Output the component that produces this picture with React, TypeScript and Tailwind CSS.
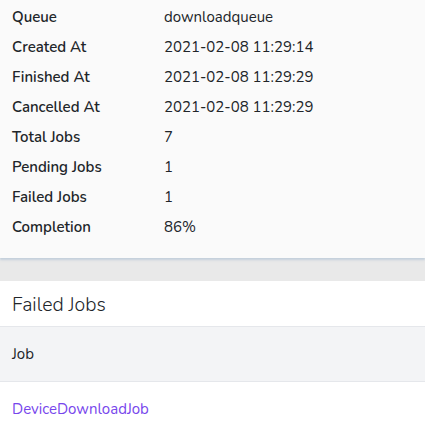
const rows: [string, string][] = [
  ['Queue', 'downloadqueue'],
  ['Created At', '2021-02-08 11:29:14'],
  ['Finished At', '2021-02-08 11:29:29'],
  ['Cancelled At', '2021-02-08 11:29:29'],
  ['Total Jobs', '7'],
  ['Pending Jobs', '1'],
  ['Failed Jobs', '1'],
  ['Completion', '86%'],
];

export default function App() {
  return (
    <div className="w-[425px] h-[436px] overflow-hidden bg-[#e9e9e9] text-[#212529] font-['Nunito','Lato',sans-serif] text-[15px]">
      <div className="bg-[#fafafa] pt-[2px] pb-[16px] shadow-[0_2px_2px_rgba(170,190,210,0.6)]">
        {rows.map(([label, value]) => (
          <div key={label} className="flex h-[30px] items-center px-[12px]">
            <div className="w-[152px] font-semibold">{label}</div>
            <div>{value}</div>
          </div>
        ))}
      </div>

      <div className="mt-[23px] bg-white">
        <div className="h-[45px] flex items-center pt-[3px] px-[12px] text-[19.5px] font-light">Failed Jobs</div>
        <div className="h-[56px] flex items-center px-[12px] bg-[#f3f4f6] border-y border-[#e5e7eb]">Job</div>
        <div className="h-[54px] flex items-center px-[12px]">
          <a className="text-[#7746ec]" href="#">DeviceDownloadJob</a>
        </div>
      </div>
    </div>
  );
}
